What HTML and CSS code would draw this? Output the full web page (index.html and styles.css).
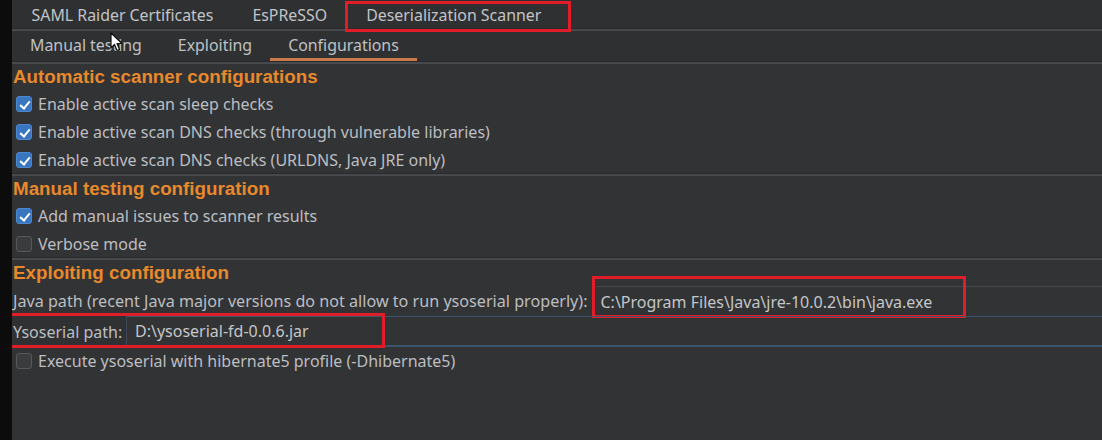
FILE: index.html
```html
<!DOCTYPE html>
<html lang="en">
<head>
<meta charset="UTF-8">
<title>Deserialization Scanner - Configurations</title>
<link rel="stylesheet" href="styles.css">
</head>
<body>

<div class="app">
    <!-- Extension tabs -->
    <nav class="tabs main-tabs">
        <div class="tab">SAML Raider Certificates</div>
        <div class="tab">EsPReSSO</div>
        <div class="tab marked mark-tab">Deserialization Scanner</div>
    </nav>
    <div class="sep"></div>

    <nav class="tabs sub-tabs">
        <div class="tab">Manual testing</div>
        <div class="tab">Exploiting</div>
        <div class="tab active">Configurations</div>
    </nav>
    <div class="sep"></div>

    <section class="group">
        <h2>Automatic scanner configurations</h2>
        <label class="check-row"><span class="box checked"></span>Enable active scan sleep checks</label>
        <label class="check-row"><span class="box checked"></span>Enable active scan DNS checks (through vulnerable libraries)</label>
        <label class="check-row"><span class="box checked"></span>Enable active scan DNS checks (URLDNS, Java JRE only)</label>
    </section>
    <div class="sep"></div>

    <section class="group">
        <h2>Manual testing configuration</h2>
        <label class="check-row"><span class="box checked"></span>Add manual issues to scanner results</label>
        <label class="check-row"><span class="box"></span>Verbose mode</label>
    </section>
    <div class="sep"></div>

    <section class="group">
        <h2>Exploiting configuration</h2>
        <div class="field-row java-row">
            <span class="field-label">Java path (recent Java major versions do not allow to run ysoserial properly):</span>
            <div class="field marked mark-java">C:\Program Files\Java\jre-10.0.2\bin\java.exe</div>
        </div>
        <div class="field-row yso-row marked mark-yso">
            <span class="field-label boxed">Ysoserial path:</span>
            <div class="field blue">D:\ysoserial-fd-0.0.6.jar</div>
        </div>
        <label class="check-row"><span class="box"></span>Execute ysoserial with hibernate5 profile (-Dhibernate5)</label>
    </section>

    <!-- mouse pointer captured in the screenshot -->
    <svg class="cursor" width="13" height="20" viewBox="0 0 13 20">
        <path d="M1 1 L1 16 L4.5 12.5 L7 18.5 L9.5 17.5 L7 11.5 L12 11.5 Z" fill="#fff" stroke="#111" stroke-width="1.2" stroke-linejoin="round"/>
    </svg>
</div>

</body>
</html>
```

FILE: styles.css
```css
body {
    margin: 0;
    background: #0c0c0d;
    font-family: "Noto Sans", "Open Sans", sans-serif;
    font-size: 16px;
    color: #bcbec2;
}

.app {
    position: relative;
    margin-left: 12px;
    height: 440px;
    background: #323334;
    overflow: hidden;
}

.tabs {
    display: flex;
    background: #2f3032;
}
.main-tabs {
    height: 29px;
}
.sub-tabs {
    height: 31px;
}
.tab {
    position: relative;
    display: flex;
    align-items: center;
    padding: 0 19.5px;
    font-size: 15.9px;
    color: #c2c4c7;
    white-space: nowrap;
}
.sub-tabs .tab {
    padding: 0 18px 3px;
    font-size: 15.9px;
    color: #bfc1c4;
}
.sub-tabs .tab.active::before {
    content: "";
    position: absolute;
    left: 0;
    right: 0;
    bottom: 1px;
    height: 3px;
    background: #c9794c;
}

.sep {
    height: 2px;
    background: #48494c;
    border-top: 1px solid #29292b;
    margin-top: -1px;
}

.group {
    padding-left: 1px;
}
h2 {
    margin: 0;
    height: 26px;
    line-height: 26px;
    font-family: "Liberation Sans", Arial, sans-serif;
    font-weight: bold;
    font-size: 18.8px;
    color: #e9892d;
}

.check-row {
    display: flex;
    align-items: center;
    height: 28px;
    white-space: nowrap;
}
.box {
    box-sizing: border-box;
    width: 16px;
    height: 16px;
    margin: 0 6px 0 3px;
    border: 1px solid #55585c;
    border-radius: 3px;
    background: #3a3c3e;
    position: relative;
}
.box.checked {
    background: #3976c2;
    border-color: #4d87cf;
}
.box.checked::after {
    content: "";
    position: absolute;
    left: 4.5px;
    top: 1.5px;
    width: 4px;
    height: 8px;
    border: solid #fff;
    border-width: 0 2px 2px 0;
    transform: rotate(40deg);
}

.field-row {
    display: flex;
    align-items: stretch;
    white-space: nowrap;
}
.java-row {
    height: 30px;
}
.java-row .field-label {
    display: flex;
    align-items: center;
    padding-right: 9px;
    font-size: 16.15px;
}
.field {
    flex: 1;
    display: flex;
    align-items: center;
    padding-left: 4px;
    border-top: 1px solid #46484b;
    color: #c4c6c9;
}
.yso-row {
    height: 31px;
}
.field-label.boxed {
    display: flex;
    align-items: center;
    width: 113px;
    background: #303133;
    border-right: 1px solid #3c4958;
}
.field.blue {
    padding-left: 8px;
    border-top: 1px solid #3c546c;
    border-bottom: 2px solid #3c546c;
}

/* red annotation frames drawn over the capture */
.marked {
    position: relative;
}
.marked::after {
    content: "";
    position: absolute;
    box-sizing: border-box;
    border: 3px solid #e11d2a;
    pointer-events: none;
}
.mark-tab::after {
    left: -2px;
    top: 1px;
    width: 226px;
    height: 31px;
}
.mark-java::after {
    left: -4px;
    top: -11px;
    width: 374px;
    height: 42px;
}
.mark-yso::after {
    left: -10px;
    top: -3px;
    width: 382px;
    height: 35px;
}

.cursor {
    position: absolute;
    left: 98px;
    top: 32px;
}
```
